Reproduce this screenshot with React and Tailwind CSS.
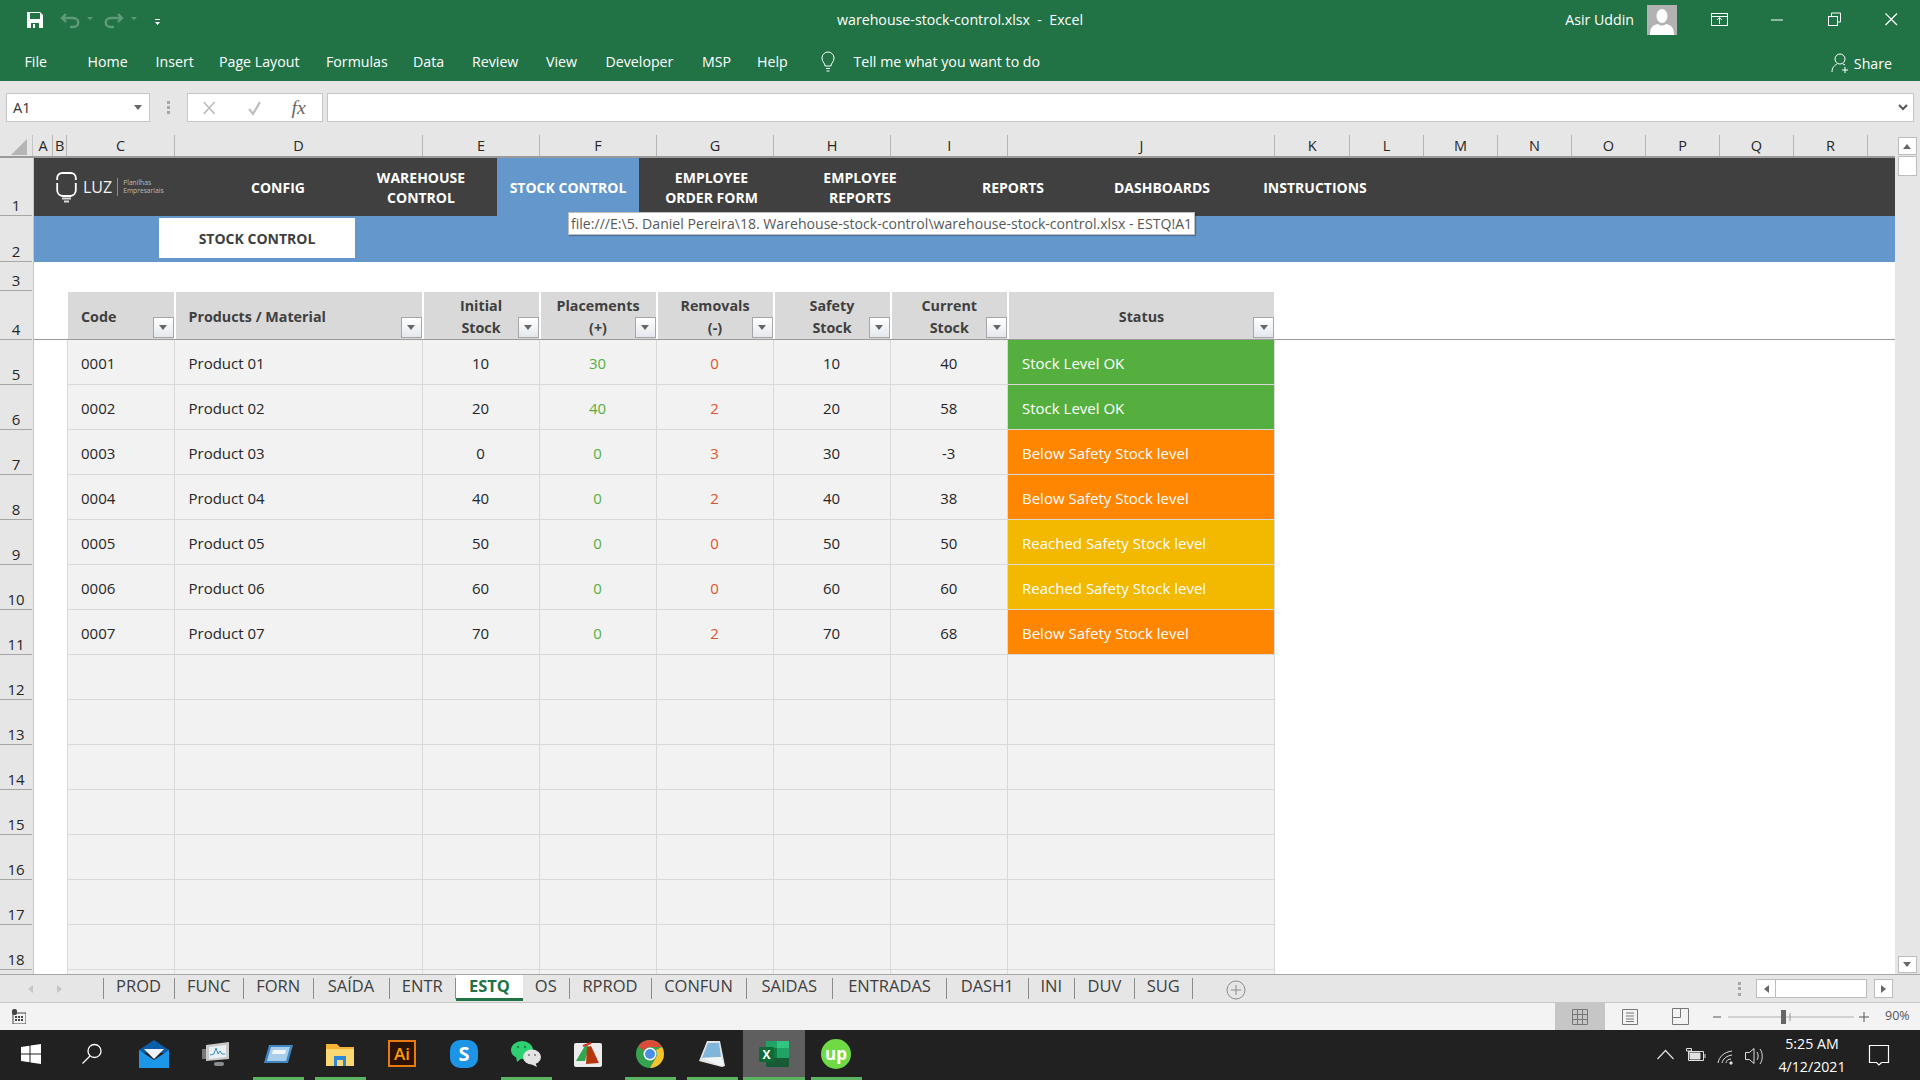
import React from 'react';

const ribbonTabs = [
  { label: 'File', w: 'w-[63px]' },
  { label: 'Home', w: 'w-[68px]' },
  { label: 'Insert', w: 'w-[63.5px]' },
  { label: 'Page Layout', w: 'w-[107px]' },
  { label: 'Formulas', w: 'w-[87px]' },
  { label: 'Data', w: 'w-[59px]' },
  { label: 'Review', w: 'w-[74px]' },
  { label: 'View', w: 'w-[59.5px]' },
  { label: 'Developer', w: 'w-[96.5px]' },
  { label: 'MSP', w: 'w-[55px]' },
  { label: 'Help', w: 'w-[63.5px]' },
];

const colHeads = [
  { label: 'A', w: 'w-[20px]' },
  { label: 'B', w: 'w-[13.5px]' },
  { label: 'C', w: 'w-[108px]' },
  { label: 'D', w: 'w-[248px]' },
  { label: 'E', w: 'w-[117px]' },
  { label: 'F', w: 'w-[117px]' },
  { label: 'G', w: 'w-[117px]' },
  { label: 'H', w: 'w-[117px]' },
  { label: 'I', w: 'w-[117.5px]' },
  { label: 'J', w: 'w-[267px]' },
  { label: 'K', w: 'w-[74.5px]' },
  { label: 'L', w: 'w-[74px]' },
  { label: 'M', w: 'w-[74px]' },
  { label: 'N', w: 'w-[74px]' },
  { label: 'O', w: 'w-[74px]' },
  { label: 'P', w: 'w-[74px]' },
  { label: 'Q', w: 'w-[74px]' },
  { label: 'R', w: 'w-[74px]' },
];

const navItems = [
  { label: ['CONFIG'], w: 'w-[134px]' },
  { label: ['WAREHOUSE', 'CONTROL'], w: 'w-[152px]' },
  { label: ['STOCK CONTROL'], w: 'w-[142px]', active: true },
  { label: ['EMPLOYEE', 'ORDER FORM'], w: 'w-[145px]' },
  { label: ['EMPLOYEE', 'REPORTS'], w: 'w-[152px]' },
  { label: ['REPORTS'], w: 'w-[154px]' },
  { label: ['DASHBOARDS'], w: 'w-[144px]' },
  { label: ['INSTRUCTIONS'], w: 'w-[162px]' },
];

const GRID = 'grid grid-cols-[107.5px_248px_117px_117px_117px_117px_117.5px_267px]';

const heads = [
  { label: ['Code'], left: true },
  { label: ['Products / Material'], left: true },
  { label: ['Initial', 'Stock'] },
  { label: ['Placements', '(+)'] },
  { label: ['Removals', '(-)'] },
  { label: ['Safety', 'Stock'] },
  { label: ['Current', 'Stock'] },
  { label: ['Status'] },
];

const OK = 'Stock Level OK';
const BELOW = 'Below Safety Stock level';
const REACHED = 'Reached Safety Stock level';

const rows = [
  ['0001', 'Product 01', '10', '30', '0', '10', '40', OK],
  ['0002', 'Product 02', '20', '40', '2', '20', '58', OK],
  ['0003', 'Product 03', '0', '0', '3', '30', '-3', BELOW],
  ['0004', 'Product 04', '40', '0', '2', '40', '38', BELOW],
  ['0005', 'Product 05', '50', '0', '0', '50', '50', REACHED],
  ['0006', 'Product 06', '60', '0', '0', '60', '60', REACHED],
  ['0007', 'Product 07', '70', '0', '2', '70', '68', BELOW],
];

const statusColor = {
  [OK]: 'bg-[#55af3e]',
  [BELOW]: 'bg-[#ff8600]',
  [REACHED]: 'bg-[#f3b800]',
};

const sheetTabs = [
  { label: 'PROD', w: 'w-[71px]' },
  { label: 'FUNC', w: 'w-[69.5px]' },
  { label: 'FORN', w: 'w-[69.5px]' },
  { label: 'SAÍDA', w: 'w-[76px]' },
  { label: 'ENTR', w: 'w-[66.5px]' },
  { label: 'ESTQ', w: 'w-[67px]', active: true },
  { label: 'OS', w: 'w-[46.5px]' },
  { label: 'RPROD', w: 'w-[82px]' },
  { label: 'CONFUN', w: 'w-[95px]' },
  { label: 'SAIDAS', w: 'w-[86.5px]' },
  { label: 'ENTRADAS', w: 'w-[114px]' },
  { label: 'DASH1', w: 'w-[81.5px]' },
  { label: 'INI', w: 'w-[46.5px]' },
  { label: 'DUV', w: 'w-[60px]' },
  { label: 'SUG', w: 'w-[57.5px]' },
];

function QuickAccess() {
  return (
    <svg viewBox="20 10 150 20" width="150" height="20" className="ml-[20px]">
      <path d="M27 12h13l3 3v13H27z" fill="#fff" />
      <rect x="30" y="13" width="10" height="6" fill="#217346" />
      <rect x="31" y="23" width="8" height="5" fill="#217346" />
      <rect x="33" y="24" width="2" height="4" fill="#fff" />
      <g fill="none" stroke="#5f9a7b" strokeWidth="2.4">
        <path d="M66 14l-4 4 4 4M62 18h11c7 0 7 9 0 9h-3" />
        <path d="M118 14l4 4-4 4M122 18h-11c-7 0-7 9 0 9h3" />
      </g>
      <path d="M87 17h6l-3 3zM131 17h6l-3 3z" fill="#5f9a7b" />
      <path d="M155 19h5v1h-5zM155 22h5l-2.5 3z" fill="#fff" />
    </svg>
  );
}

function WindowControls() {
  return (
    <svg viewBox="1690 0 230 40" width="230" height="40">
      <g fill="none" stroke="#fff" strokeWidth="1">
        <rect x="1711.5" y="13.5" width="16" height="12" />
        <path d="M1712 16.5h15M1719.5 24v-6M1717 20l2.5-2.5 2.5 2.5" />
        <path d="M1771 20h12" />
        <rect x="1828.5" y="16.5" width="9" height="9" />
        <path d="M1831.5 16v-3h9v9h-3" />
        <path d="M1885.5 13.5l11.5 11.5M1897 13.5l-11.5 11.5" strokeWidth="1.2" />
      </g>
    </svg>
  );
}

function Avatar() {
  return (
    <svg viewBox="0 0 30 30" width="30" height="30">
      <rect width="30" height="30" fill="#b2b2b2" />
      <ellipse cx="15" cy="11" rx="5.5" ry="7" fill="#fff" />
      <path d="M3 30c0-8 3-10 8-11 3 2 5 2 8 0 5 1 8 3 8 11z" fill="#fff" />
    </svg>
  );
}

function Bulb() {
  return (
    <svg viewBox="0 0 21 31" width="21" height="31" className="shrink-0">
      <path d="M1.2 8V6a5 5 0 0 1 5-5h8.6a5 5 0 0 1 5 5v2M1.2 11v7a6 6 0 0 0 5 6h8.6a6 6 0 0 0 5-6v-7" fill="none" stroke="#fff" strokeWidth="1.8" />
      <path d="M6 25.5h9v2H6zM8 28.5h5v2H8z" fill="#d9d9d9" />
    </svg>
  );
}

function FilterButton() {
  return (
    <span className="absolute right-0 bottom-[1px] flex h-[21px] w-[21px] items-center justify-center border border-[#a6a6a6] bg-gradient-to-b from-white to-[#e4e8ee]">
      <svg viewBox="0 0 8 5" width="8" height="5"><path d="M0 0h8L4 5z" fill="#666" /></svg>
    </span>
  );
}

function SheetGrid() {
  return (
    <div className="relative min-w-0 flex-1 bg-white">
      {/* Nav band */}
      <div className="flex h-[58px] bg-[#404040] text-[14px] font-bold leading-[20px] text-white">
        <div className="flex w-[177px] items-center pl-[22px]">
          <Bulb />
          <span className="ml-[6px] text-[16px] font-normal text-[#f2f2f2]">LUZ</span>
          <span className="mx-[5px] h-[18px] w-px bg-[#8c8c8c]" />
          <span className="text-[6.7px] font-normal leading-[8px] text-[#bdbdbd]">Planilhas<br />Empresariais</span>
        </div>
        {navItems.map(item => (
          <div key={item.label.join(' ')} className={`flex flex-col items-center justify-center pt-[1px] ${item.w} ${item.active ? 'bg-[#6497cb]' : ''}`}>
            {item.label.map(line => <span key={line}>{line}</span>)}
          </div>
        ))}
      </div>

      {/* Sub header */}
      <div className="h-[46px] bg-[#6497cb] pl-[125px] pt-[2px]">
        <div className="flex h-[40px] w-[196px] items-center justify-center bg-white text-[14px] font-bold text-[#404040]">
          STOCK CONTROL
        </div>
      </div>

      {/* Hyperlink tooltip */}
      <div className="absolute left-[534px] top-[54px] z-10 flex h-[23px] w-[627px] items-center whitespace-nowrap border border-[#bdbdbd] bg-white pl-[2px] text-[14.1px] text-[#575757] shadow-[1px_1px_1px_rgba(0,0,0,0.25)]">
        file:///E:\5. Daniel Pereira\18. Warehouse-stock-control\warehouse-stock-control.xlsx - ESTQ!A1
      </div>

      <div className="h-[29px]" />

      {/* Table head */}
      <div className="h-[49px] border-b border-[#9a9a9a] pl-[33px]">
        <div className={`${GRID} h-[48px]`}>
          {heads.map(h => (
            <div key={h.label[0]} className="relative mx-[1px] mt-[1px] flex flex-col justify-center bg-[#d9d9d9] bg-[radial-gradient(#cdcdcd_0.6px,transparent_0.6px)] bg-[length:4px_4px] pt-[2px] text-[14.3px] font-bold leading-[22px] text-[#404040]">
              {h.label.map(line => (
                <span key={line} className={h.left ? 'pl-[13px] text-left' : 'text-center'}>{line}</span>
              ))}
              <FilterButton />
            </div>
          ))}
        </div>
      </div>

      {/* Table body */}
      <div className="pl-[33px] text-[15px] text-[#262626]">
        {rows.map(r => (
          <div key={r[0]} className={`${GRID} h-[45px]`}>
            <div className="flex items-center border-x border-b border-[#d9d9d9] bg-[#f2f2f2] pl-[13px] pt-[2px]">{r[0]}</div>
            <div className="flex items-center border-r border-b border-[#d9d9d9] bg-[#f2f2f2] pl-[14px] pt-[2px]">{r[1]}</div>
            <div className="flex items-center justify-center border-r border-b border-[#d9d9d9] bg-[#f2f2f2] pt-[2px]">{r[2]}</div>
            <div className="flex items-center justify-center border-r border-b border-[#d9d9d9] bg-[#f2f2f2] pt-[2px] text-[#55af3e]">{r[3]}</div>
            <div className="flex items-center justify-center border-r border-b border-[#d9d9d9] bg-[#f2f2f2] pt-[2px] text-[#e5532d]">{r[4]}</div>
            <div className="flex items-center justify-center border-r border-b border-[#d9d9d9] bg-[#f2f2f2] pt-[2px]">{r[5]}</div>
            <div className="flex items-center justify-center border-r border-b border-[#d9d9d9] bg-[#f2f2f2] pt-[2px]">{r[6]}</div>
            <div className={`flex items-center border-r border-b border-[#d9d9d9] pl-[14px] pt-[2px] text-white ${statusColor[r[7]]}`}>{r[7]}</div>
          </div>
        ))}
        {[12, 13, 14, 15, 16, 17, 18, 19].map(n => (
          <div key={n} className={`${GRID} h-[45px]`}>
            <div className="border-x border-b border-[#d9d9d9] bg-[#f2f2f2]" />
            {[1, 2, 3, 4, 5, 6, 7].map(c => (
              <div key={c} className="border-r border-b border-[#d9d9d9] bg-[#f2f2f2]" />
            ))}
          </div>
        ))}
      </div>
    </div>
  );
}

function RowHeaders() {
  const row = 'flex items-end justify-center border-b border-[#a6a6a6]';
  return (
    <div className="w-[34px] shrink-0 overflow-hidden border-r border-[#c6c6c6] bg-[#e6e6e6] pr-[1px] text-[15px] leading-[20px] text-[#262626]">
      <div className={`${row} h-[58px]`}>1</div>
      <div className={`${row} h-[46px]`}>2</div>
      <div className={`${row} h-[29px]`}>3</div>
      <div className={`${row} h-[49px] border-[#9a9a9a]`}>4</div>
      {[5, 6, 7, 8, 9, 10, 11, 12, 13, 14, 15, 16, 17, 18].map(n => (
        <div key={n} className={`${row} h-[45px]`}>{n}</div>
      ))}
    </div>
  );
}

function WinIcon() {
  return (
    <svg viewBox="0 0 20 20" width="20" height="20" fill="#fff">
      <path d="M0 3l8.5-1.3v7.8H0zM9.5 1.5L20 0v9.5H9.5zM0 10.5h8.5v7.8L0 17zM9.5 10.5H20V20L9.5 18.5z" />
    </svg>
  );
}

const taskIcons = [
  {
    key: 'win', w: 'w-[61px]',
    icon: <WinIcon />,
  },
  {
    key: 'search', w: 'w-[62px]',
    icon: (
      <svg viewBox="0 0 22 22" width="22" height="22" fill="none" stroke="#fff" strokeWidth="1.3">
        <circle cx="13.5" cy="8" r="6.5" /><path d="M9 13L1.5 20.5" />
      </svg>
    ),
  },
  {
    key: 'mail', w: 'w-[62px]',
    icon: (
      <svg viewBox="0 0 30 28" width="30" height="28">
        <path d="M0 10L15 0l15 10v3H0z" fill="#0b5cab" />
        <path d="M0 10v18h30V10L15 20z" fill="#1c97e8" />
        <path d="M5 9h20l-10 10z" fill="#eef3f7" />
      </svg>
    ),
  },
  {
    key: 'monitor', w: 'w-[62px]',
    icon: (
      <svg viewBox="0 0 28 26" width="28" height="26">
        <path d="M4 4l23-3v17L4 20z" fill="#c9c9c9" />
        <path d="M7 6l17-2v12L7 18z" fill="#e8f1f7" />
        <path d="M8 14l4-1 2-6 2 6 2-3 2 3 3 0" fill="none" stroke="#3e8dc4" strokeWidth="1" />
        <rect x="12" y="21" width="10" height="4" rx="2" fill="#8c8c8c" />
        <rect x="0" y="8" width="4" height="10" fill="#777" />
      </svg>
    ),
  },
  {
    key: 'card', w: 'w-[62px]',
    icon: (
      <svg viewBox="0 0 30 20" width="30" height="20">
        <path d="M6 1h24l-5 18H1z" fill="#3f86c2" />
        <path d="M8 3h19l-4 14H4z" fill="#a9cdea" />
        <path d="M10 6h13l-1 4H9z" fill="#eef6fc" />
      </svg>
    ),
  },
  {
    key: 'folder', w: 'w-[62px]',
    icon: (
      <svg viewBox="0 0 28 24" width="28" height="24">
        <path d="M0 2h11l3 3h14v19H0z" fill="#f5b433" />
        <path d="M0 7h28v17H0z" fill="#fbd872" />
        <path d="M8 14h12v10h-3v-6h-6v6H8z" fill="#2c87d6" />
      </svg>
    ),
  },
  {
    key: 'ai', w: 'w-[62px]',
    icon: (
      <span className="flex h-[27px] w-[28px] items-center justify-center border-2 border-[#e87a10] bg-[#2a1205] text-[17px] font-semibold leading-none text-[#ff9a00]">Ai</span>
    ),
  },
  {
    key: 'skype', w: 'w-[62px]',
    icon: (
      <span className="flex h-[28px] w-[28px] items-center justify-center rounded-[10px] bg-[#1c95e6] text-[20px] font-bold leading-none text-white">S</span>
    ),
  },
  {
    key: 'wechat', w: 'w-[62px]',
    icon: (
      <svg viewBox="0 0 30 26" width="30" height="26">
        <ellipse cx="11" cy="9" rx="11" ry="9" fill="#2fd071" />
        <path d="M5 15l1 6 5-4z" fill="#2fd071" />
        <circle cx="7" cy="6" r="1.2" fill="#1c8a4b" /><circle cx="14" cy="6" r="1.2" fill="#1c8a4b" />
        <ellipse cx="21" cy="16" rx="9" ry="7.5" fill="#e3e3e3" />
        <path d="M24 21l2 5-6-3z" fill="#e3e3e3" />
        <circle cx="18" cy="14" r="1" fill="#777" /><circle cx="24" cy="14" r="1" fill="#777" />
      </svg>
    ),
  },
  {
    key: 'paper', w: 'w-[62px]',
    icon: (
      <svg viewBox="0 0 28 26" width="28" height="26">
        <rect x="0" y="2" width="28" height="24" rx="2" fill="#ececec" />
        <path d="M2 20L12 3l3 3-4 14z" fill="#2fa84f" />
        <path d="M13 6l4-1 8 17-13 1z" fill="#b5350f" />
        <path d="M9 5l8-3" stroke="#d93025" strokeWidth="2" />
      </svg>
    ),
  },
  {
    key: 'chrome', w: 'w-[62px]',
    icon: (
      <svg viewBox="0 0 28 28" width="28" height="28">
        <circle cx="14" cy="14" r="14" fill="#34a24f" />
        <path d="M14 0a14 14 0 0 1 12.1 7H14a7 7 0 0 0-6.1 3.5L2.3 6.4A14 14 0 0 1 14 0z" fill="#dd4a3a" />
        <path d="M26.1 7A14 14 0 0 1 14 28l6-10.5A7 7 0 0 0 20 10z" fill="#f8c12e" />
        <circle cx="14" cy="14" r="6.5" fill="#fff" />
        <circle cx="14" cy="14" r="5" fill="#4a8ee8" />
      </svg>
    ),
  },
  {
    key: 'note', w: 'w-[62px]',
    icon: (
      <svg viewBox="0 0 28 28" width="28" height="28">
        <path d="M9 1h13l5 25-3 1L1 21z" fill="#e4e4e4" />
        <path d="M10 3h11l2 14L4 18z" fill="#7fb6d9" />
        <path d="M4 18l19-1 3 8-3 1z" fill="#f1f5f5" />
      </svg>
    ),
  },
  {
    key: 'excel', w: 'w-[62px]', active: true,
    icon: (
      <svg viewBox="0 0 30 28" width="30" height="28">
        <rect x="7" y="1" width="23" height="26" rx="1" fill="#107c41" />
        <rect x="18" y="1" width="12" height="7" fill="#33c481" />
        <rect x="7" y="1" width="11" height="7" fill="#21a366" />
        <rect x="18" y="8" width="12" height="10" fill="#21a366" />
        <rect x="7" y="18" width="23" height="9" fill="#185c37" />
        <rect x="0" y="7" width="15" height="15" rx="1" fill="#0f6b36" />
        <text x="7.5" y="19" textAnchor="middle" fontSize="12" fontWeight="700" fill="#fff" fontFamily="Open Sans">X</text>
      </svg>
    ),
  },
  {
    key: 'up', w: 'w-[62px]',
    icon: (
      <span className="flex h-[30px] w-[30px] items-center justify-center rounded-full bg-[#6fda44] text-[17px] font-bold leading-none text-white">up</span>
    ),
  },
];

const taskRunning = ['card', 'folder', 'wechat', 'chrome', 'note', 'excel', 'up'];

export default function App() {
  return (
    <div className="flex h-[1080px] w-[1920px] flex-col overflow-hidden bg-white font-['Open_Sans',sans-serif] text-black">
      {/* Title bar + ribbon tabs */}
      <div className="h-[81px] shrink-0 bg-[#217346] text-white">
        <div className="flex h-[40px] items-center">
          <div className="flex flex-1 basis-0 items-center"><QuickAccess /></div>
          <div className="whitespace-pre text-[14.2px]">warehouse-stock-control.xlsx  -  Excel</div>
          <div className="flex flex-1 basis-0 items-center justify-end">
            <span className="mr-[13px] text-[14.2px]">Asir Uddin</span>
            <span className="mr-[13px]"><Avatar /></span>
            <WindowControls />
          </div>
        </div>
        <div className="flex h-[41px] items-center pl-[24.5px] pt-[3px] text-[14.2px]">
          {ribbonTabs.map(t => <span key={t.label} className={t.w}>{t.label}</span>)}
          <svg viewBox="0 0 14 22" width="14" height="22" fill="none" stroke="#fff" strokeWidth="1">
            <path d="M4 15c0-3-3-4-3-8a6 6 0 0 1 12 0c0 4-3 5-3 8zM5 17.5h4M5.5 20h3" />
          </svg>
          <span className="ml-[19px]">Tell me what you want to do</span>
          <div className="ml-auto mr-[28px] mt-[3px] flex items-center">
            <svg viewBox="0 0 19 20" width="19" height="20" fill="none" stroke="#fff" strokeWidth="1" className="mr-[4px]">
              <circle cx="9" cy="6" r="5" /><path d="M1 19c0-5 3-7 5-8M12 11l2 1M14 14v6M11 17h6" />
            </svg>
            <span>Share</span>
          </div>
        </div>
      </div>

      {/* Formula bar */}
      <div className="flex h-[54px] shrink-0 items-start bg-[#e6e6e6] pt-[12px]">
        <div className="ml-[6px] flex h-[29px] w-[144px] items-center justify-between border border-[#c6c6c6] bg-white pl-[6px] pr-[7px] text-[14.5px] text-[#333]">
          A1
          <svg viewBox="0 0 8 5" width="8" height="5"><path d="M0 0h8L4 5z" fill="#666" /></svg>
        </div>
        <div className="ml-[17px] mt-[8px] flex h-[13px] w-[3px] flex-col justify-between">
          <span className="h-[3px] w-[3px] bg-[#a6a6a6]" /><span className="h-[3px] w-[3px] bg-[#a6a6a6]" /><span className="h-[3px] w-[3px] bg-[#a6a6a6]" />
        </div>
        <div className="ml-[17px] h-[29px] w-[136px] border border-[#c6c6c6] bg-white">
          <svg viewBox="0 0 136 27" width="134" height="27">
            <path d="M16 8l11 12M27 8L16 20" stroke="#bdbdbd" strokeWidth="1.6" fill="none" />
            <path d="M62 15l4 5 7-12" stroke="#bdbdbd" strokeWidth="2.2" fill="none" />
            <text x="105" y="20" fontSize="20" fontStyle="italic" fontFamily="Liberation Serif" fill="#666">fx</text>
          </svg>
        </div>
        <div className="ml-[4px] flex h-[29px] w-[1587px] items-center justify-end border border-[#c6c6c6] bg-white pr-[5px]">
          <svg viewBox="0 0 10 7" width="10" height="7" fill="none" stroke="#555" strokeWidth="2"><path d="M1 1l4 4 4-4" /></svg>
        </div>
      </div>

      {/* Sheet + vertical scrollbar */}
      <div className="flex h-[839px] shrink-0 overflow-hidden">
        <div className="flex w-[1895px] flex-col overflow-hidden">
          {/* Column letters */}
          <div className="flex h-[23px] shrink-0 border-b-2 border-[#9a9a9a] bg-[#e6e6e6] text-[14.5px] leading-[20px] text-[#262626]">
            <div className="flex w-[33px] items-end justify-center border-r border-[#c6c6c6] pb-[1px] pl-[6px]">
              <svg viewBox="0 0 16 16" width="16" height="16"><path d="M16 0v16H0z" fill="#b5b5b5" /></svg>
            </div>
            {colHeads.map(c => (
              <div key={c.label} className={`flex items-center justify-center border-r border-[#b5b5b5] pl-[1px] ${c.w}`}>{c.label}</div>
            ))}
          </div>
          <div className="flex min-h-0 flex-1">
            <RowHeaders />
            <SheetGrid />
          </div>
        </div>
        <div className="flex w-[25px] flex-col items-center bg-[#e6e6e6] pr-[1px] pt-[2px]">
          <div className="flex h-[18px] w-[19px] items-center justify-center border border-[#bdbdbd] bg-white">
            <svg viewBox="0 0 8 5" width="8" height="5"><path d="M4 0l4 5H0z" fill="#666" /></svg>
          </div>
          <div className="mt-[1px] h-[20px] w-[19px] border border-[#bdbdbd] bg-white" />
          <div className="mt-auto mb-[1px] flex h-[17px] w-[19px] items-center justify-center border border-[#bdbdbd] bg-white">
            <svg viewBox="0 0 8 5" width="8" height="5"><path d="M0 0h8L4 5z" fill="#666" /></svg>
          </div>
        </div>
      </div>

      {/* Sheet tabs */}
      <div className="flex h-[29px] shrink-0 items-start border-y border-[#a6a6a6] border-b-[#c6c6c6] bg-[#e6e6e6] text-[16.5px] text-[#404040]">
        <div className="mt-[3px] flex h-[21px] w-[103.5px] items-center border-r border-[#8c8c8c] pl-[28px]">
          <svg viewBox="0 0 5 8" width="5" height="8"><path d="M5 0v8L0 4z" fill="#c6c6c6" /></svg>
          <svg viewBox="0 0 5 8" width="5" height="8" className="ml-[24px]"><path d="M0 0v8l5-4z" fill="#c6c6c6" /></svg>
        </div>
        <div className="flex">
          {sheetTabs.map(t => t.active ? (
            <div key={t.label} className={`flex h-[26px] items-start justify-center border-b-[3px] border-[#217346] bg-white font-bold leading-[21px] text-[#217346] ${t.w}`}>{t.label}</div>
          ) : (
            <div key={t.label} className={`mt-[3px] flex h-[21px] items-center justify-center border-r border-[#8c8c8c] pb-[4px] ${t.w}`}>{t.label}</div>
          ))}
        </div>
        <svg viewBox="0 0 20 20" width="20" height="20" fill="none" stroke="#8c8c8c" className="ml-[33px] mt-[5px]">
          <circle cx="10" cy="10" r="9" /><path d="M10 5v10M5 10h10" />
        </svg>
        <div className="ml-auto flex h-full items-center pr-[27px]">
          <div className="mr-[15px] flex h-[14px] w-[3px] flex-col justify-between">
            <span className="h-[3px] w-[3px] bg-[#a6a6a6]" /><span className="h-[3px] w-[3px] bg-[#a6a6a6]" /><span className="h-[3px] w-[3px] bg-[#a6a6a6]" />
          </div>
          <div className="flex h-[19px] w-[111px] border border-[#bdbdbd] bg-white">
            <div className="flex w-[19px] items-center justify-center border-r border-[#bdbdbd]">
              <svg viewBox="0 0 5 8" width="5" height="8"><path d="M5 0v8L0 4z" fill="#666" /></svg>
            </div>
          </div>
          <div className="ml-[7px] flex h-[19px] w-[19px] items-center justify-center border border-[#bdbdbd] bg-white">
            <svg viewBox="0 0 5 8" width="5" height="8"><path d="M0 0v8l5-4z" fill="#666" /></svg>
          </div>
        </div>
      </div>

      {/* Status bar */}
      <div className="flex h-[27px] shrink-0 items-center bg-[#f3f3f3] text-[12px] text-[#555]">
        <svg viewBox="0 0 14 15" width="14" height="15" className="ml-[12px]">
          <rect x="0" y="0" width="5" height="6" rx="2" fill="#444" />
          <rect x="1" y="4" width="13" height="11" fill="none" stroke="#444" />
          <path d="M3 7h2v2H3zM6 7h2v2H6zM9 7h2v2H9zM3 10h2v2H3zM6 10h2v2H6zM9 10h2v2H9z" fill="#444" />
        </svg>
        <div className="ml-auto flex h-full w-[50px] items-center justify-center bg-[#c6c6c6]">
          <svg viewBox="0 0 16 16" width="16" height="16" fill="none" stroke="#777"><path d="M.5.5h15v15H.5zM.5 5.5h15M.5 10.5h15M5.5.5v15M10.5.5v15" /></svg>
        </div>
        <div className="flex w-[50px] justify-center">
          <svg viewBox="0 0 16 16" width="16" height="16" fill="none" stroke="#777"><path d="M.5.5h15v15H.5zM4 4h8M4 7h8M4 10h8M4 12.5h8" /></svg>
        </div>
        <div className="flex w-[50px] justify-center">
          <svg viewBox="0 0 17 17" width="17" height="17" fill="none" stroke="#777"><path d="M.5.5h16v16H.5zM8.5.5v9H.5" /></svg>
        </div>
        <svg viewBox="0 0 180 16" width="180" height="16">
          <path d="M8 8h8M154 8h10M159 3v10" stroke="#555" strokeWidth="1" fill="none" />
          <path d="M23 8h126" stroke="#b0b0b0" strokeWidth="1" />
          <path d="M85 4v8" stroke="#999" />
          <rect x="76" y="1" width="5" height="14" fill="#666" />
        </svg>
        <span className="w-[35px] text-[12.5px]">90%</span>
      </div>

      {/* Windows taskbar */}
      <div className="flex h-[50px] shrink-0 items-stretch bg-[#212121]">
        {taskIcons.map(t => (
          <div key={t.key} className={`flex flex-col items-center ${t.w} ${t.active ? 'bg-[#5f5f5f]' : ''}`}>
            <div className="flex h-[47px] items-center justify-center">{t.icon}</div>
            {taskRunning.includes(t.key) && (
              <div className={`h-[3px] bg-[#5cb362] ${t.active ? 'w-full' : 'w-[51px]'}`} />
            )}
          </div>
        ))}
        <div className="ml-auto flex items-center">
          <svg viewBox="1650 1030 128 50" width="128" height="50" fill="none" stroke="#e0e0e0">
            <path d="M1657.5 1059l8-8.5 8 8.5" strokeWidth="1.2" />
            <path d="M1688.5 1051.5h15v9h-15zM1705 1054v4" />
            <path d="M1690 1053h10v6h-10z" fill="#e0e0e0" />
            <path d="M1686.5 1048.5h5v2.5h-5zM1689 1051v3" />
            <path d="M1718 1063c1-6 6-11 14-12M1722 1063c1-4 4-7 10-8M1726 1063c0-2 2-4 5-4" />
            <circle cx="1731" cy="1063" r="1.2" fill="#e0e0e0" />
            <path d="M1745.5 1052.5h4l4.5-4v15l-4.5-4h-4zM1757 1052c1.5 2 1.5 6 0 8M1760 1049c3 4 3 11 0 15" />
          </svg>
          <div className="flex w-[68px] flex-col items-center text-[14.2px] leading-[23px] text-white">
            <span className="whitespace-nowrap">5:25 AM</span>
            <span className="whitespace-nowrap">4/12/2021</span>
          </div>
          <svg viewBox="1846 1030 74 50" width="74" height="50" fill="none" stroke="#fff" strokeWidth="1.2">
            <path d="M1869.5 1045.5h19v17h-7l-2.5 2.5-2.5-2.5h-7z" />
          </svg>
        </div>
      </div>
    </div>
  );
}
